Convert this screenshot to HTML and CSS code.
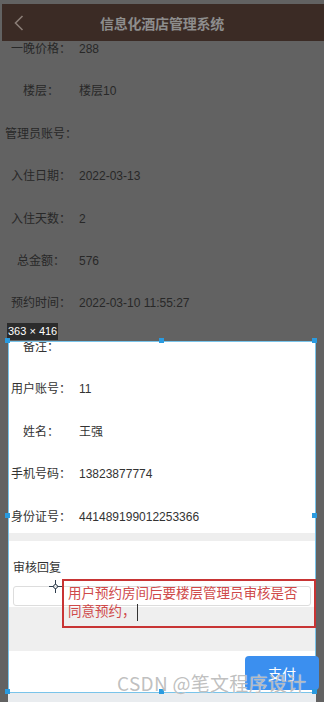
FILE: index.html
```html
<!DOCTYPE html>
<html lang="zh-CN">
<head>
    <meta charset="UTF-8">
    <meta name="viewport" content="width=device-width, initial-scale=1.0">
    <title>信息化酒店管理系统</title>
    <link rel="stylesheet" href="styles.css">
</head>
<body>

<div class="screen">
    <header class="nav">
        <svg class="back" width="12" height="16" viewBox="0 0 12 16">
            <path d="M9.5 1 L2.5 8 L9.5 15" fill="none" stroke="#8a7d76" stroke-width="1.6"/>
        </svg>
        <h1>信息化酒店管理系统</h1>
    </header>

    <div class="info dim">
        <div class="row"><span class="label">一晚价格：</span><span class="value">288</span></div>
        <div class="row"><span class="label">楼层：</span><span class="value">楼层10</span></div>
        <div class="row"><span class="label">管理员账号：</span><span class="value"></span></div>
        <div class="row"><span class="label">入住日期：</span><span class="value">2022-03-13</span></div>
        <div class="row"><span class="label">入住天数：</span><span class="value">2</span></div>
        <div class="row"><span class="label">总金额：</span><span class="value">576</span></div>
        <div class="row"><span class="label">预约时间：</span><span class="value">2022-03-10 11:55:27</span></div>
    </div>

    <div class="capture">
        <div class="info lit">
            <div class="row first"><span class="label">备注：</span><span class="value"></span></div>
            <div class="row"><span class="label">用户账号：</span><span class="value">11</span></div>
            <div class="row"><span class="label">姓名：</span><span class="value">王强</span></div>
            <div class="row"><span class="label">手机号码：</span><span class="value">13823877774</span></div>
            <div class="row"><span class="label">身份证号：</span><span class="value">441489199012253366</span></div>
        </div>

        <div class="divider"></div>

        <div class="reply">
            <label for="reply">审核回复</label>
            <input type="text" id="reply">
        </div>

        <div class="pad"></div>

        <div class="actions">
            <button type="button">支付</button>
        </div>

        <!-- screenshot tool overlay -->
        <div class="size-tag">363 × 416</div>
        <span class="handle h-tl"></span>
        <span class="handle h-tc"></span>
        <span class="handle h-tr"></span>
        <span class="handle h-ml"></span>
        <span class="handle h-mr"></span>
        <span class="handle h-bl"></span>
        <span class="handle h-bc"></span>
        <span class="handle h-br"></span>

        <div class="note">用户预约房间后要楼层管理员审核是否同意预约，<span class="caret"></span></div>

        <svg class="crosshair" width="13" height="13" viewBox="0 0 13 13">
            <path d="M0 6.5 H4.5 M8.5 6.5 H13 M6.5 0 V4.5 M6.5 8.5 V13" stroke="#2f3e4e" stroke-width="1"/>
            <circle cx="6.5" cy="6.5" r="2" fill="none" stroke="#2f3e4e" stroke-width="1"/>
        </svg>
    </div>

    <div class="below"></div>

    <div class="watermark">CSDN @笔文程序设计</div>
</div>

</body>
</html>
```

FILE: styles.css
```css
* {
    margin: 0;
    padding: 0;
    box-sizing: border-box;
}
body {
    width: 324px;
    height: 702px;
    overflow: hidden;
    background: #5c5c5c;
    font-family: "Liberation Sans", "Noto Sans CJK SC", sans-serif;
    font-size: 12px;
}
.screen {
    position: relative;
    height: 702px;
    padding-top: 4px;
    background: #626262;
}

.nav {
    position: relative;
    z-index: 2;
    height: 37px;
    margin-left: 2px;
    background: #3b2b25;
    display: flex;
    align-items: center;
    justify-content: center;
}
.nav .back {
    position: absolute;
    left: 11px;
    top: 11px;
}
.nav h1 {
    font-size: 14px;
    font-weight: bold;
    color: #8d8d8d;
    letter-spacing: -0.2px;
    padding-right: 2px;
}

.info {
    display: flex;
    flex-direction: column;
    gap: 24.4px;
}
.row {
    display: flex;
    line-height: 18px;
    height: 18px;
    white-space: nowrap;
}
.label {
    width: 74px;
    margin-left: 4px;
    text-align: center;
}
.value {
    margin-left: 1px;
}
.dim {
    margin-top: -1px;
    color: #282828;
}

.capture {
    position: relative;
    margin-top: 28.6px;
    margin-left: 8px;
    width: 308px;
    height: 352px;
    border: 1px solid #79c4ea;
    background: #fff;
    color: #333;
}
.lit {
    height: 182.6px;
    overflow: hidden;
}
.lit .row {
    margin-left: -9px;
}
.lit .first {
    margin-top: -4px;
}

.divider {
    margin-top: 8.4px;
    height: 8px;
    background: #eeeeee;
}

.reply {
    padding: 18px 4px 0;
}
.reply label {
    display: block;
    line-height: 18px;
}
.reply input {
    display: block;
    width: 100%;
    height: 20px;
    margin-top: 9px;
    border: 1px solid #dddddd;
    border-radius: 3px;
    outline: none;
}

.pad {
    margin-top: 1px;
    height: 44px;
    background: #efefef;
}

.actions {
    height: 41px;
    display: flex;
    justify-content: flex-end;
    align-items: flex-start;
    margin-right: -4px;
}
.actions button {
    margin-top: 5px;
    width: 74px;
    height: 34px;
    background: #3b8fef;
    color: #fff;
    border: none;
    border-radius: 4px;
    font-family: inherit;
    font-size: 14px;
}

.size-tag {
    position: absolute;
    left: -2px;
    top: -19px;
    height: 17px;
    padding: 0 1px;
    line-height: 17px;
    background: #2b2b2b;
    color: #fff;
    font-family: "Liberation Sans", sans-serif;
    font-size: 11px;
    white-space: nowrap;
}
.handle {
    position: absolute;
    width: 5px;
    height: 5px;
    background: #2a9be0;
}
.h-tl { left: -4px; top: -4px; }
.h-tc { left: 150px; top: -4px; }
.h-tr { left: 303px; top: -4px; }
.h-ml { left: -4px; top: 171px; }
.h-mr { left: 303px; top: 171px; }
.h-bl { left: -4px; top: 347px; }
.h-bc { left: 150px; top: 347px; }
.h-br { left: 303px; top: 347px; }

.note {
    position: absolute;
    left: 53px;
    top: 237px;
    width: 254px;
    height: 49px;
    border: 2px solid #c83434;
    padding: 2px 12px 0 4px;
    color: #cf4a4a;
    font-family: "Noto Sans CJK SC", sans-serif;
    font-size: 13.5px;
    line-height: 18px;
}
.caret {
    display: inline-block;
    width: 1px;
    height: 17px;
    margin-left: 1px;
    background: #333;
    vertical-align: middle;
}
.crosshair {
    position: absolute;
    left: 40px;
    top: 238px;
}

.below {
    margin-left: 8px;
    width: 308px;
    height: 10px;
    background: #e9ecef;
}

.watermark {
    position: absolute;
    left: 117px;
    top: 672px;
    font-family: "Noto Sans CJK SC", sans-serif;
    font-size: 19px;
    line-height: 22px;
    color: rgba(175, 175, 175, 0.8);
    text-shadow: 0 0 1px rgba(255, 255, 255, 0.9);
    letter-spacing: 0.3px;
    white-space: nowrap;
}
```
